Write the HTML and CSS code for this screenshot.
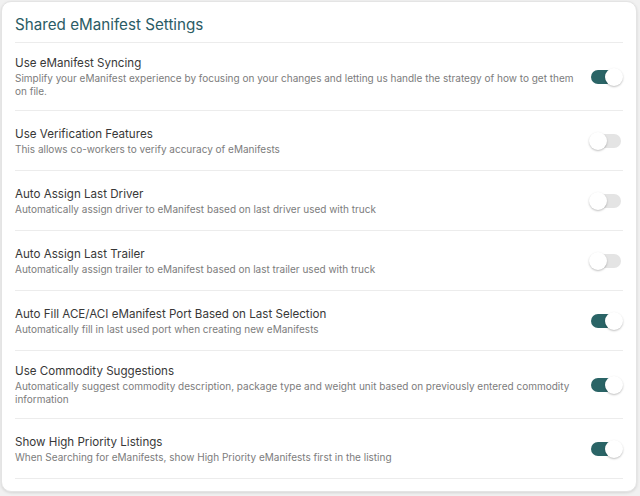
FILE: index.html
```html
<!DOCTYPE html>
<html lang="en">
<head>
<meta charset="utf-8">
<title>Shared eManifest Settings</title>
<link rel="stylesheet" href="styles.css">
</head>
<body>
<section class="card">
  <h2 class="title">Shared eManifest Settings</h2>
  <ul class="settings">
    <li class="row">
      <div class="text">
        <div class="label">Use eManifest Syncing</div>
        <div class="desc">Simplify your eManifest experience by focusing on your changes and letting us handle the strategy of how to get them on file.</div>
      </div>
      <span class="toggle on"><span class="knob"></span></span>
    </li>
    <li class="row">
      <div class="text">
        <div class="label">Use Verification Features</div>
        <div class="desc">This allows co-workers to verify accuracy of eManifests</div>
      </div>
      <span class="toggle"><span class="knob"></span></span>
    </li>
    <li class="row">
      <div class="text">
        <div class="label">Auto Assign Last Driver</div>
        <div class="desc">Automatically assign driver to eManifest based on last driver used with truck</div>
      </div>
      <span class="toggle"><span class="knob"></span></span>
    </li>
    <li class="row">
      <div class="text">
        <div class="label">Auto Assign Last Trailer</div>
        <div class="desc">Automatically assign trailer to eManifest based on last trailer used with truck</div>
      </div>
      <span class="toggle"><span class="knob"></span></span>
    </li>
    <li class="row">
      <div class="text">
        <div class="label">Auto Fill ACE/ACI eManifest Port Based on Last Selection</div>
        <div class="desc">Automatically fill in last used port when creating new eManifests</div>
      </div>
      <span class="toggle on"><span class="knob"></span></span>
    </li>
    <li class="row">
      <div class="text">
        <div class="label">Use Commodity Suggestions</div>
        <div class="desc">Automatically suggest commodity description, package type and weight unit based on previously entered commodity information</div>
      </div>
      <span class="toggle on"><span class="knob"></span></span>
    </li>
    <li class="row">
      <div class="text">
        <div class="label">Show High Priority Listings</div>
        <div class="desc">When Searching for eManifests, show High Priority eManifests first in the listing</div>
      </div>
      <span class="toggle on"><span class="knob"></span></span>
    </li>
  </ul>
</section>
</body>
</html>
```
FILE: styles.css
```css
html, body {
  margin: 0;
  padding: 0;
}
body {
  background: #f1f1f1;
  font-family: Inter, "Noto Sans", "Liberation Sans", sans-serif;
  width: 640px;
  height: 496px;
  overflow: hidden;
}
.card {
  margin: 1px 3px 0 1px;
  background: #ffffff;
  border: 1px solid #e4e4e4;
  border-radius: 10px;
  box-shadow: 0 1px 3px rgba(0, 0, 0, 0.12);
  padding: 0 13px 12px 13px;
}
.title {
  margin: 0;
  padding: 13px 0 7px;
  font-size: 15.2px;
  line-height: 20px;
  font-weight: 400;
  color: #2b5c65;
  border-bottom: 1px solid #ececec;
}
.settings {
  list-style: none;
  margin: 0;
  padding: 0;
}
.row {
  display: flex;
  align-items: center;
  gap: 16px;
  padding: 12px 0;
  border-bottom: 1px solid #ececec;
}
.text {
  flex: 1;
  min-height: 35px;
  display: flex;
  flex-direction: column;
  justify-content: center;
}
.label {
  font-size: 11.6px;
  line-height: 17px;
  color: #383838;
}
.desc {
  font-size: 10px;
  line-height: 13px;
  color: #7c7c7c;
}
.toggle {
  position: relative;
  flex: none;
  width: 30px;
  height: 14px;
  border-radius: 7px;
  background: #e4e4e4;
  margin-right: 2px;
}
.toggle.on {
  background: #2a6466;
}
.knob {
  position: absolute;
  top: -2px;
  left: -2px;
  width: 18px;
  height: 18px;
  border-radius: 50%;
  background: #ffffff;
  box-shadow: 0 1px 2px rgba(0, 0, 0, 0.25);
}
.toggle.on .knob {
  left: 14px;
}
```
